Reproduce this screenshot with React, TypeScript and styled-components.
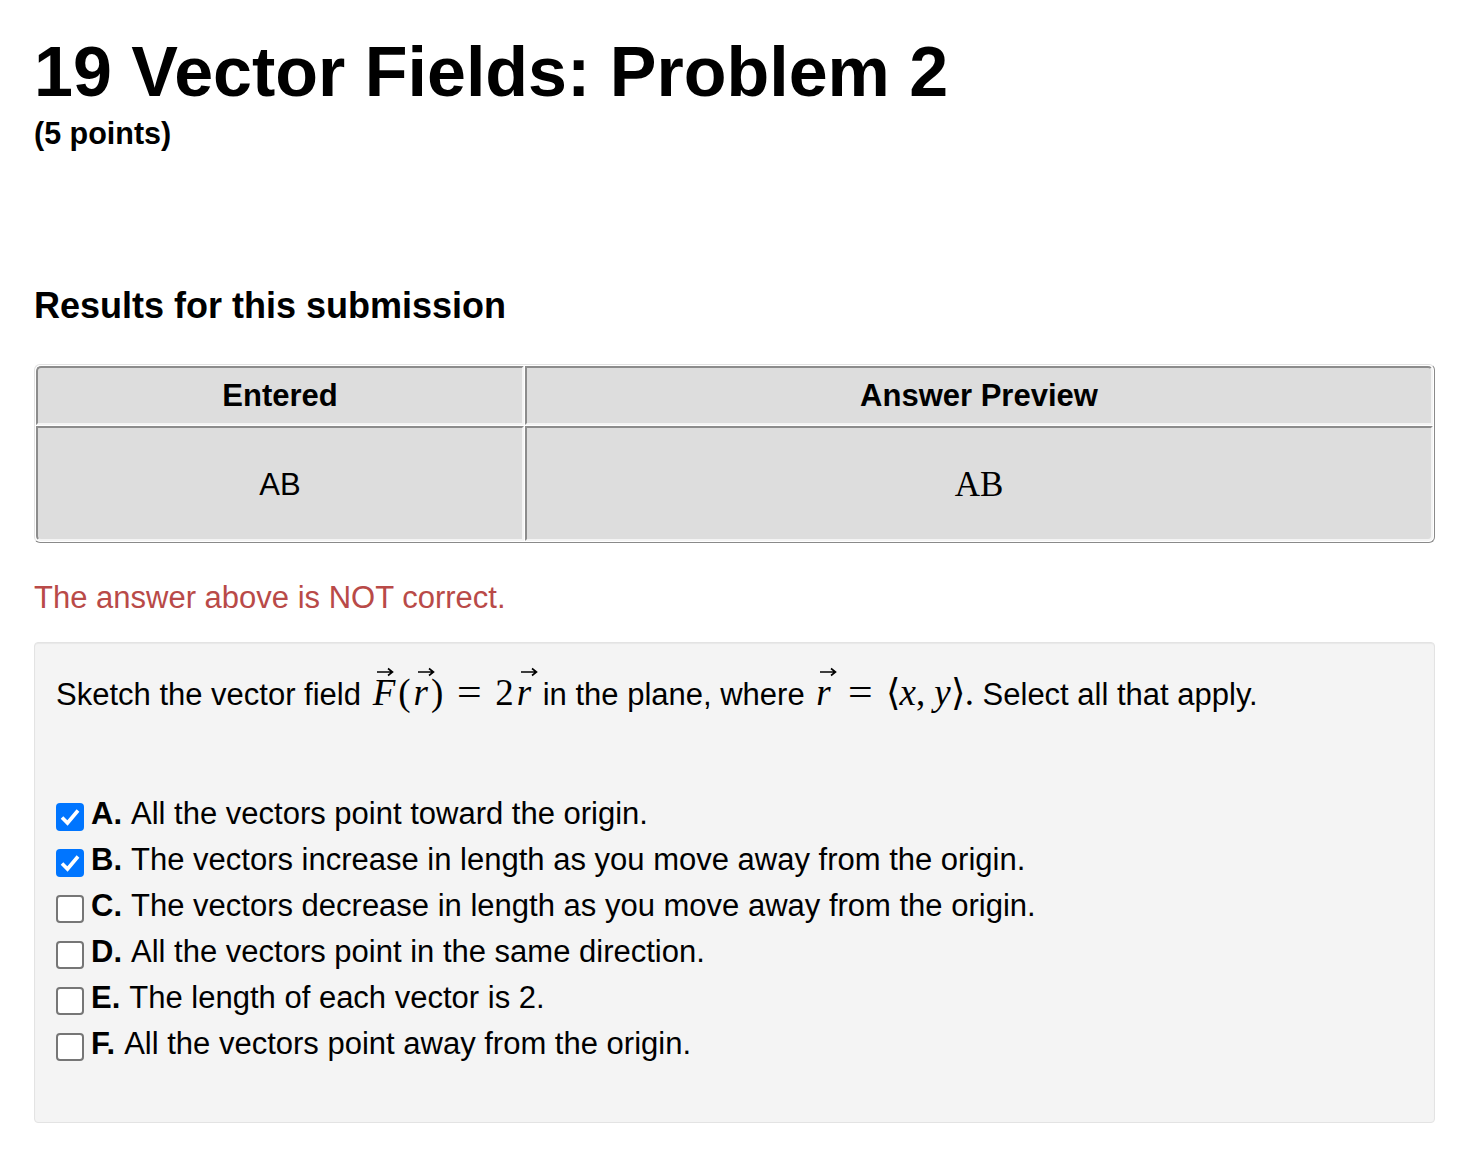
import React from "react";
import styled, { createGlobalStyle } from "styled-components";

const Global = createGlobalStyle`
  body {
    margin: 0;
    background: #fff;
    color: #000;
    font-family: "Liberation Sans", Arial, sans-serif;
  }
`;

const Page = styled.div`
  padding: 34px 25px 40px 34px;
  display: flex;
  flex-direction: column;
`;

const Title = styled.h1`
  margin: 0;
  font-size: 70px;
  line-height: 76px;
  font-weight: bold;
`;

const Points = styled.div`
  margin-top: 5px;
  font-size: 30.5px;
  line-height: 36px;
  font-weight: bold;
`;

const Subtitle = styled.h2`
  margin: 133px 0 0;
  font-size: 36px;
  line-height: 44px;
  font-weight: bold;
`;

const Results = styled.table`
  margin-top: 36px;
  width: 1401px;
  border-collapse: separate;
  border-spacing: 1px;
  border: 1px solid;
  border-color: #e2e2e2 #8a8a8a #8a8a8a #e2e2e2;
  border-radius: 6px;
  background: #fff;
`;

const Cell = styled.td<{ $head?: boolean; $math?: boolean }>`
  background: #dddddd;
  border: 2px solid;
  border-color: #8c8c8c #f4f4f4 #f4f4f4 #8c8c8c;
  text-align: center;
  padding: ${(p) => (p.$head ? "0" : "2px 0 0")};
  height: ${(p) => (p.$head ? "55px" : "109px")};
  font-size: ${(p) => (p.$math ? "35px" : "31px")};
  font-weight: ${(p) => (p.$head ? "bold" : "normal")};
  font-family: ${(p) =>
    p.$math ? '"Liberation Serif", "Times New Roman", serif' : "inherit"};
  &.first {
    width: 484px;
  }
  tr:first-child &.first {
    border-top-left-radius: 5px;
  }
  tr:first-child &:last-child {
    border-top-right-radius: 5px;
  }
  tr:last-child &.first {
    border-bottom-left-radius: 5px;
  }
  tr:last-child &:last-child {
    border-bottom-right-radius: 5px;
  }
`;

const Verdict = styled.div`
  margin-top: 32px;
  font-size: 31px;
  line-height: 46px;
  color: #b94a48;
`;

const Well = styled.div`
  margin-top: 21px;
  width: 1401px;
  box-sizing: border-box;
  background: #f4f4f4;
  border: 1px solid #e3e3e3;
  border-radius: 4px;
  box-shadow: inset 0 1px 1px rgba(0, 0, 0, 0.05);
  padding: 27px 21px 55px 21px;
  font-size: 31px;
  line-height: 46px;
`;

const Prompt = styled.div`
  margin-bottom: 73px;
  white-space: nowrap;
`;

const Math = styled.span`
  font-family: "Liberation Serif", "Times New Roman", serif;
  font-size: 37px;
`;

const Var = styled.span`
  font-style: italic;
`;

const Op = styled.span`
  display: inline-block;
  transform: scaleX(1.18);
  margin: 0 15px 0 16px;
`;

const Sep = styled.span`
  margin-right: 9px;
`;

const VecWrap = styled.span`
  position: relative;
  display: inline-block;
  font-style: italic;
  padding: 0 3px;
`;

const VecArrow = styled.svg`
  position: absolute;
  left: 6px;
  top: -3px;
  width: 18px;
  height: 10px;
`;

const Choices = styled.div`
  display: flex;
  flex-direction: column;
`;

const Choice = styled.label`
  display: flex;
  align-items: center;
  gap: 7px;
`;

const Box = styled.span<{ $on: boolean }>`
  width: 28px;
  height: 28px;
  min-width: 28px;
  box-sizing: border-box;
  border-radius: 4px;
  margin-top: 6px;
  flex: none;
  display: flex;
  align-items: center;
  justify-content: center;
  background: ${(p) => (p.$on ? "#0075ff" : "#fff")};
  border: ${(p) => (p.$on ? "none" : "2px solid #767676")};
`;

const Letter = styled.b`
  margin-right: 9px;
`;

function Vec({ v }: { v: string }) {
  return (
    <VecWrap>
      {v}
      <VecArrow viewBox="0 0 18 10">
        <path d="M1 5H16M12 1.5L16.5 5L12 8.5" stroke="#000" strokeWidth="1.6" fill="none" />
      </VecArrow>
    </VecWrap>
  );
}

const choices = [
  { key: "A", text: "All the vectors point toward the origin.", on: true },
  { key: "B", text: "The vectors increase in length as you move away from the origin.", on: true },
  { key: "C", text: "The vectors decrease in length as you move away from the origin.", on: false },
  { key: "D", text: "All the vectors point in the same direction.", on: false },
  { key: "E", text: "The length of each vector is 2.", on: false },
  { key: "F", text: "All the vectors point away from the origin.", on: false },
];

export default function App() {
  return (
    <Page>
      <Global />
      <Title>19 Vector Fields: Problem 2</Title>
      <Points>(5 points)</Points>
      <Subtitle>Results for this submission</Subtitle>
      <Results>
        <tbody>
          <tr>
            <Cell as="th" $head className="first">Entered</Cell>
            <Cell as="th" $head>Answer Preview</Cell>
          </tr>
          <tr>
            <Cell className="first">AB</Cell>
            <Cell $math>AB</Cell>
          </tr>
        </tbody>
      </Results>
      <Verdict>The answer above is NOT correct.</Verdict>
      <Well>
        <Prompt>
          Sketch the vector field{" "}
          <Math>
            <Vec v="F" />(<Vec v="r" />)<Op>=</Op>2<Vec v="r" />
          </Math>{" "}
          in the plane, where{" "}
          <Math>
            <Vec v="r" />
            <Op>=</Op>⟨<Var>x</Var>
            <Sep>,</Sep>
            <Var>y</Var>⟩.
          </Math>{" "}
          Select all that apply.
        </Prompt>
        <Choices>
          {choices.map((c) => (
            <Choice key={c.key}>
              <Box $on={c.on}>
                {c.on && (
                  <svg width="22" height="20" viewBox="0 0 22 20">
                    <path d="M3 10.5L8.5 16L19 3.5" stroke="#fff" strokeWidth="3.6" fill="none" />
                  </svg>
                )}
              </Box>
              <span>
                <Letter>{c.key}.</Letter>
                {c.text}
              </span>
            </Choice>
          ))}
        </Choices>
      </Well>
    </Page>
  );
}
